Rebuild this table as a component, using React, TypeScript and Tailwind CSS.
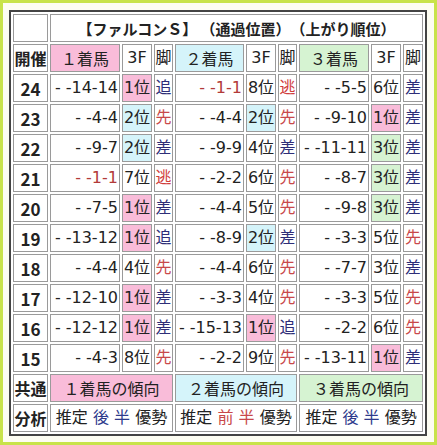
type Horse = [string, string, string, string];

const rows: [string, Horse, Horse, Horse][] = [
  ["24", ["- -14-14", "1位", "p", "追"], ["- -1-1", "8位", "", "逃"], ["- -5-5", "6位", "", "差"]],
  ["23", ["- -4-4", "2位", "b", "先"], ["- -4-4", "2位", "b", "先"], ["- -9-10", "1位", "p", "差"]],
  ["22", ["- -9-7", "2位", "b", "差"], ["- -9-9", "4位", "", "差"], ["- -11-11", "3位", "g", "差"]],
  ["21", ["- -1-1", "7位", "", "逃"], ["- -2-2", "6位", "", "先"], ["- -8-7", "3位", "g", "差"]],
  ["20", ["- -7-5", "1位", "p", "差"], ["- -4-4", "5位", "", "先"], ["- -9-8", "3位", "g", "差"]],
  ["19", ["- -13-12", "1位", "p", "追"], ["- -8-9", "2位", "b", "差"], ["- -3-3", "5位", "", "先"]],
  ["18", ["- -4-4", "4位", "", "先"], ["- -4-4", "6位", "", "先"], ["- -7-7", "3位", "", "差"]],
  ["17", ["- -12-10", "1位", "p", "差"], ["- -3-3", "4位", "", "先"], ["- -3-3", "5位", "", "先"]],
  ["16", ["- -12-12", "1位", "p", "差"], ["- -15-13", "1位", "p", "追"], ["- -2-2", "6位", "", "先"]],
  ["15", ["- -4-3", "8位", "", "先"], ["- -2-2", "9位", "", "先"], ["- -13-11", "1位", "p", "差"]],
];

const bg: Record<string, string> = {
  p: "bg-[#f9bcd9]",
  b: "bg-[#d5f4fa]",
  g: "bg-[#d6f3d2]",
  "": "bg-white",
};

const legColor: Record<string, string> = {
  追: "text-[#2e2e78]",
  差: "text-[#2e2e78]",
  先: "text-[#c8484a]",
  逃: "text-[#d03c3c]",
};

const cell = "border border-[#9a9a9a] h-[28px] p-0 leading-none whitespace-nowrap overflow-hidden";
const jp = "font-['Noto_Sans_CJK_JP',sans-serif]";
const blue = "text-[#2e3a8c]";
const red = "text-[#c8484a]";

function HorseCells({ h }: { h: Horse }) {
  const [pos, rank, color, leg] = h;
  return (
    <>
      <td className={`${cell} bg-white text-right pr-[1px] ${pos === "- -1-1" ? "text-[#b23a3a]" : ""}`}>{pos}</td>
      <td className={`${cell} ${bg[color]} text-center`}>{rank}</td>
      <td className={`${cell} bg-white text-center ${legColor[leg]}`}>{leg}</td>
    </>
  );
}

export default function App() {
  return (
    <div className="w-[437px] h-[445px] border-[3px] border-[#c8e34a] bg-[#fdfdf2] pl-[6px] pt-[7px]">
      <table className="w-[418px] table-fixed border-separate border-spacing-[2px] border-2 border-[#444] bg-white text-[16px] text-[#222] [text-spacing-trim:space-all] font-['DejaVu_Sans','Noto_Sans_CJK_JP',sans-serif]">
        <colgroup>
          <col className="w-[35px]" />
          <col className="w-[70px]" />
          <col className="w-[30px]" />
          <col className="w-[19px]" />
          <col className="w-[69px]" />
          <col className="w-[30px]" />
          <col className="w-[19px]" />
          <col className="w-[70px]" />
          <col className="w-[30px]" />
          <col className="w-[20px]" />
        </colgroup>
        <tbody>
          <tr>
            <td className={`${cell} bg-white`}></td>
            <td colSpan={9} className={`${cell} bg-white text-center font-bold text-[15px] ${jp}`}>
              【ファルコンＳ】 （通過位置）（上がり順位）
            </td>
          </tr>
          <tr>
            <td className={`${cell} bg-white text-center font-bold ${jp}`}>開催</td>
            <td className={`${cell} bg-[#f9bcd9] text-center ${jp}`}>１着馬</td>
            <td className={`${cell} bg-white text-center`}>3F</td>
            <td className={`${cell} bg-white text-center`}>脚</td>
            <td className={`${cell} bg-[#d5f4fa] text-center ${jp}`}>２着馬</td>
            <td className={`${cell} bg-white text-center`}>3F</td>
            <td className={`${cell} bg-white text-center`}>脚</td>
            <td className={`${cell} bg-[#d6f3d2] text-center ${jp}`}>３着馬</td>
            <td className={`${cell} bg-white text-center`}>3F</td>
            <td className={`${cell} bg-white text-center`}>脚</td>
          </tr>
          {rows.map(([year, a, b, c]) => (
            <tr key={year}>
              <td className={`${cell} bg-white text-center font-bold text-[17px] ${jp}`}>{year}</td>
              <HorseCells h={a} />
              <HorseCells h={b} />
              <HorseCells h={c} />
            </tr>
          ))}
          <tr>
            <td className={`${cell} bg-white text-center font-bold ${jp}`}>共通</td>
            <td colSpan={3} className={`${cell} bg-[#f9bcd9] text-center ${jp}`}>１着馬の傾向</td>
            <td colSpan={3} className={`${cell} bg-[#d5f4fa] text-center ${jp}`}>２着馬の傾向</td>
            <td colSpan={3} className={`${cell} bg-[#d6f3d2] text-center ${jp}`}>３着馬の傾向</td>
          </tr>
          <tr>
            <td className={`${cell} bg-white text-center font-bold ${jp}`}>分析</td>
            <td colSpan={3} className={`${cell} bg-white text-center`}>
              推定 <span className={blue}>後 半</span> 優勢
            </td>
            <td colSpan={3} className={`${cell} bg-white text-center`}>
              推定 <span className={red}>前 半</span> 優勢
            </td>
            <td colSpan={3} className={`${cell} bg-white text-center`}>
              推定 <span className={blue}>後 半</span> 優勢
            </td>
          </tr>
        </tbody>
      </table>
    </div>
  );
}
